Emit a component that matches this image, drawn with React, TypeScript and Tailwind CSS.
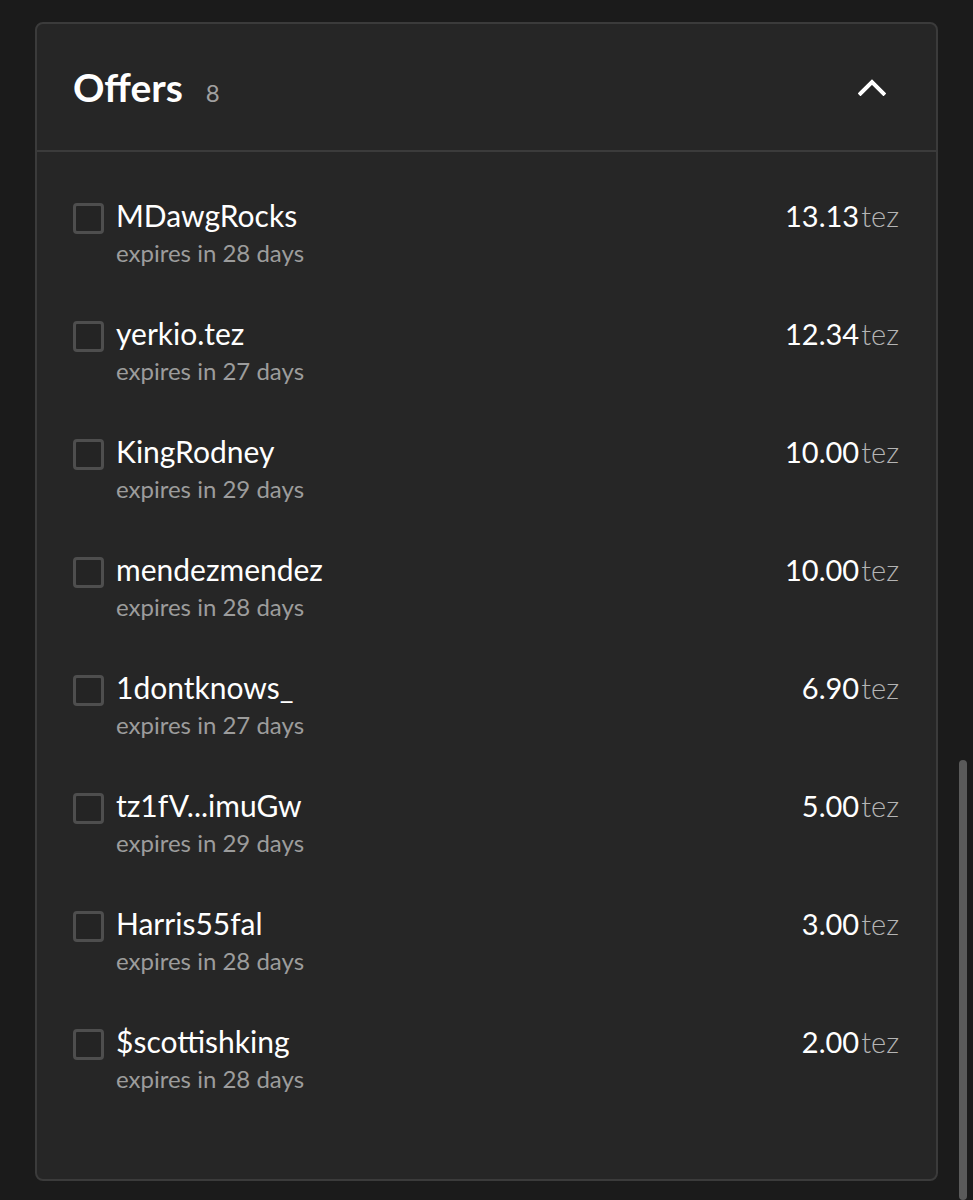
import { useState } from 'react';

type Offer = {
  from: string;
  expires: string;
  amount: string;
};

const offers: Offer[] = [
  { from: 'MDawgRocks', expires: 'expires in 28 days', amount: '13.13' },
  { from: 'yerkio.tez', expires: 'expires in 27 days', amount: '12.34' },
  { from: 'KingRodney', expires: 'expires in 29 days', amount: '10.00' },
  { from: 'mendezmendez', expires: 'expires in 28 days', amount: '10.00' },
  { from: '1dontknows_', expires: 'expires in 27 days', amount: '6.90' },
  { from: 'tz1fV...imuGw', expires: 'expires in 29 days', amount: '5.00' },
  { from: 'Harris55fal', expires: 'expires in 28 days', amount: '3.00' },
  { from: '$scottishking', expires: 'expires in 28 days', amount: '2.00' },
];

function ChevronUp() {
  return (
    <svg width="28" height="18" viewBox="0 0 28 18" fill="none">
      <path
        d="M2.5 15.5 L14 4 L25.5 15.5"
        stroke="white"
        strokeWidth="4"
        strokeLinecap="square"
      />
    </svg>
  );
}

function OfferRow({ offer }: { offer: Offer }) {
  const [checked, setChecked] = useState(false);
  return (
    <div className="flex items-start h-[118px]">
      <button
        onClick={() => setChecked(!checked)}
        className="mt-[6px] w-[31px] h-[31px] shrink-0 rounded-[4px] border-[3px] border-[#4e4e4e] bg-[#242424]"
      />
      <div className="ml-[12px] flex-1">
        <div className="text-[30px] leading-[36px] text-white">{offer.from}</div>
        <div className="mt-[5px] text-[24px] leading-[30px] text-[#9c9c9c]">{offer.expires}</div>
      </div>
      <div className="mt-[1px] text-[29px] leading-[36px] text-white whitespace-nowrap">
        {offer.amount}
        <span className="font-light text-[#b4b4b4] ml-[2px]">tez</span>
      </div>
    </div>
  );
}

export default function App() {
  return (
    <div
      className="relative min-h-[1200px] bg-[#1b1b1b] px-[35px] pt-[22px] pb-[19px]"
      style={{ fontFamily: '"Source Sans Pro", Lato, "Open Sans", sans-serif' }}
    >
      <section className="rounded-[8px] border-2 border-[#3b3b3b] bg-[#262626] h-[1159px] overflow-hidden">
        {/* Header */}
        <div className="flex items-center justify-between h-[128px] border-b-2 border-[#3b3b3b] pl-[36px] pr-[50px]">
          <div className="flex items-baseline">
            <h2 className="text-[39px] font-bold text-white">Offers</h2>
            <span className="ml-[23px] text-[24px] text-[#a0a0a0]">8</span>
          </div>
          <ChevronUp />
        </div>

        {/* Offer list */}
        <div className="pt-[45px] pl-[36px] pr-[37px]">
          {offers.map((o) => (
            <OfferRow key={o.from} offer={o} />
          ))}
        </div>
      </section>

      {/* page scrollbar thumb */}
      <div className="absolute right-[6px] top-[760px] bottom-0 w-[8px] rounded-full bg-[#5a5a5a]" />
    </div>
  );
}
